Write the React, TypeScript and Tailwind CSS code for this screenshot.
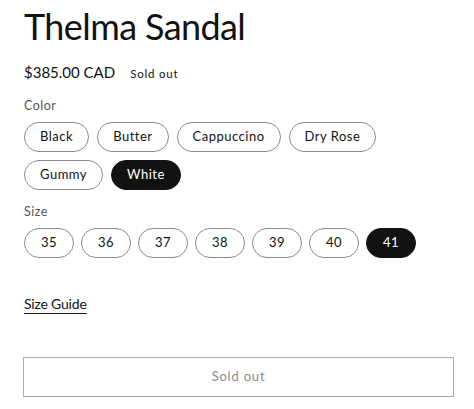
import React from "react";

const colors = ["Black", "Butter", "Cappuccino", "Dry Rose", "Gummy", "White"];
const sizes = ["35", "36", "37", "38", "39", "40", "41"];

function Pill({ label, active, w }: { label: string; active?: boolean; w?: string }) {
  return (
    <div
      className={
        "h-[30px] rounded-full border flex items-center justify-center text-[13px] tracking-[0.5px] " +
        (active ? "bg-[#121212] border-[#121212] text-white " : "bg-white border-[#8a8a8a] text-[#121212] ") +
        (w ?? "px-[15px]")
      }
    >
      {label}
    </div>
  );
}

export default function App() {
  return (
    <div className="w-[474px] h-[409px] bg-white text-[#121212] pl-[24px] pr-[21px] overflow-hidden" style={{ fontFamily: 'Lato, "Noto Sans", sans-serif' }}>
      <h1 className="text-[36px] leading-none tracking-[-0.6px] pt-[8px] m-0">Thelma Sandal</h1>
      <div className="flex items-baseline mt-[17px] h-[24px]">
        <span className="text-[15px] tracking-[0px]">$385.00 CAD</span>
        <span className="text-[11.5px] tracking-[0.8px] ml-[15px]">Sold out</span>
      </div>
      <div className="text-[12.5px] tracking-[0.5px] text-[#555] mt-[12px]">Color</div>
      <div className="flex flex-wrap gap-x-[8px] gap-y-[8px] mt-[6px] w-[400px]">
        {colors.map((c) => (
          <Pill key={c} label={c} active={c === "White"} />
        ))}
      </div>
      <div className="text-[12.5px] tracking-[0.5px] text-[#555] mt-[13px]">Size</div>
      <div className="flex gap-x-[7px] mt-[6px]">
        {sizes.map((s) => (
          <Pill key={s} label={s} active={s === "41"} w="w-[50px]" />
        ))}
      </div>
      <div className="mt-[35px] text-[14px] tracking-[-0.2px] underline underline-offset-[4px] decoration-[1px]">Size Guide</div>
      <div className="mt-[43px] -ml-[1px] w-[431px] h-[40px] border border-[#a8a8a8] flex items-center justify-center text-[13px] tracking-[0.8px] text-[#8a8a8a]">
        Sold out
      </div>
    </div>
  );
}
